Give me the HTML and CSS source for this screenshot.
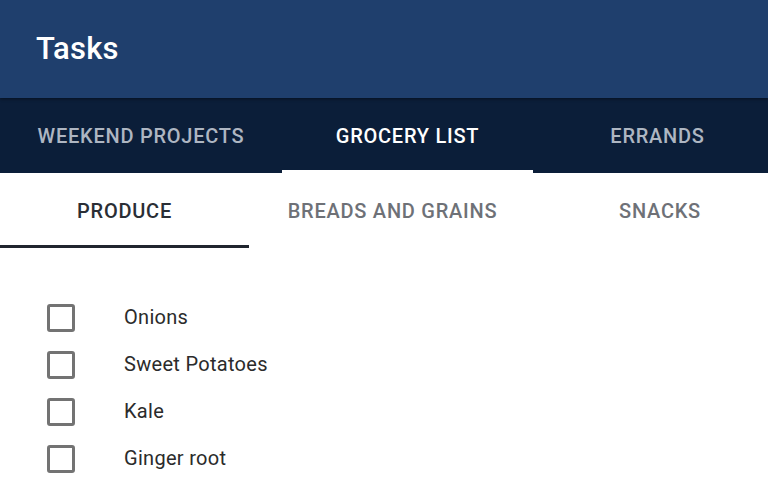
FILE: index.html
```html
<!DOCTYPE html>
<html>
<head>
<meta charset="utf-8">
<link rel="stylesheet" href="styles.css">
</head>
<body>
<header class="appbar">
  <h1 class="title">Tasks</h1>
</header>
<nav class="tabs">
  <div class="tab tab-weekend">WEEKEND PROJECTS</div>
  <div class="tab tab-grocery active">GROCERY LIST</div>
  <div class="tab tab-errands">ERRANDS</div>
</nav>
<nav class="subtabs">
  <div class="subtab sub-produce active">PRODUCE</div>
  <div class="subtab sub-breads">BREADS AND GRAINS</div>
  <div class="subtab sub-snacks">SNACKS</div>
</nav>
<ul class="list">
  <li class="item"><span class="box"></span><span class="label">Onions</span></li>
  <li class="item"><span class="box"></span><span class="label">Sweet Potatoes</span></li>
  <li class="item"><span class="box"></span><span class="label">Kale</span></li>
  <li class="item"><span class="box"></span><span class="label">Ginger root</span></li>
</ul>
</body>
</html>
```

FILE: styles.css
```css
html, body {
  margin: 0;
  padding: 0;
  background: #ffffff;
  font-family: Roboto, "Liberation Sans", sans-serif;
  width: 768px;
  height: 492px;
  overflow: hidden;
}
.appbar {
  height: 98px;
  background: #1f3f6d;
  display: flex;
  align-items: center;
  padding-left: 36px;
  box-sizing: border-box;
  position: relative;
  z-index: 1;
  box-shadow: 0 1px 3px rgba(0,0,0,0.45);
}
.title {
  margin: 0;
  color: #ffffff;
  font-size: 31px;
  font-weight: 500;
  letter-spacing: 0.2px;
  padding-bottom: 2px;
}
.tabs {
  display: grid;
  grid-template-columns: 282px 251px 1fr;
  height: 75px;
  background: #0b1e39;
}
.tab {
  display: flex;
  align-items: center;
  justify-content: center;
  font-size: 20px;
  font-weight: 500;
  letter-spacing: 0.75px;
  color: #aeb6c2;
  box-sizing: border-box;
  padding-top: 0;
}
.tab.active {
  color: #ffffff;
  border-bottom: 3px solid #ffffff;
  padding-top: 3px;
}
.tab-errands {
  padding-left: 14px;
}
.subtabs {
  display: grid;
  grid-template-columns: 249px 303px 1fr;
  height: 75px;
}
.subtab {
  display: flex;
  align-items: center;
  justify-content: center;
  font-size: 20px;
  font-weight: 500;
  letter-spacing: 0.75px;
  color: #6e7177;
  box-sizing: border-box;
  padding-top: 0;
}
.subtab.active {
  color: #2a2e35;
  border-bottom: 3px solid #20252e;
  padding-top: 3px;
}
.sub-breads {
  padding-right: 16px;
}
.sub-snacks {
  padding-left: 0;
}
.list {
  list-style: none;
  margin: 0;
  padding: 46px 0 0 47px;
}
.item {
  height: 47px;
  display: flex;
  align-items: center;
}
.box {
  width: 28px;
  height: 28px;
  box-sizing: border-box;
  border: 3px solid #737373;
  border-radius: 3px;
  flex: none;
}
.label {
  margin-left: 49px;
  font-size: 20px;
  color: #2b2b2b;
  letter-spacing: 0.3px;
  padding-bottom: 2px;
}
```
